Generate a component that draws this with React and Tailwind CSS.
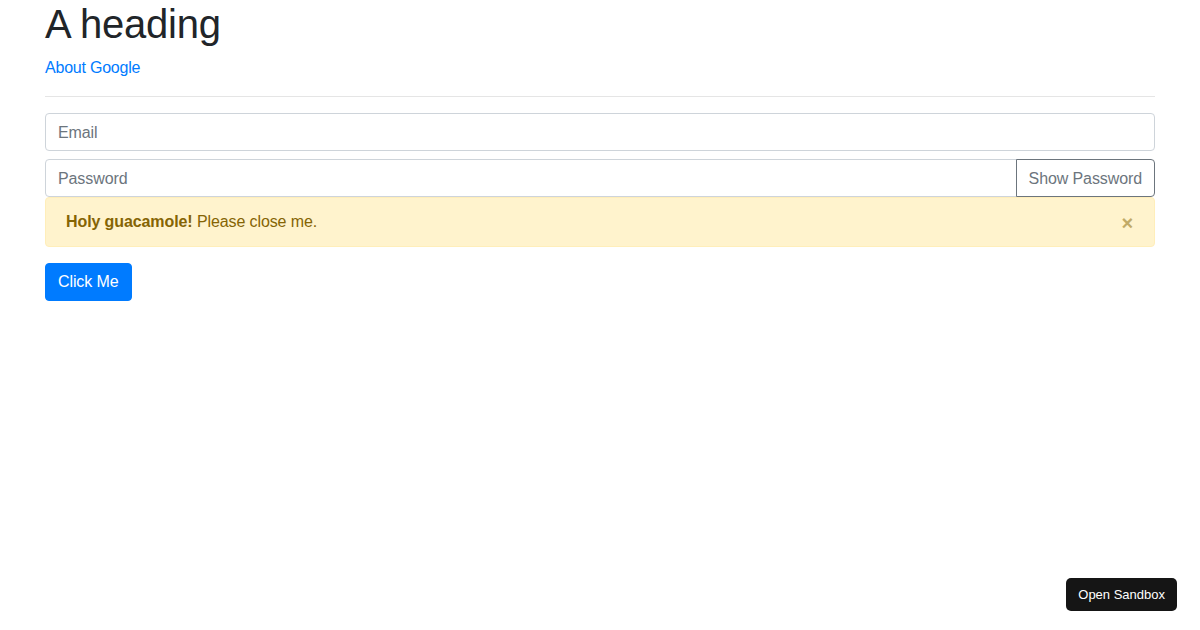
export default function App() {
  return (
    <div className="min-h-[630px] bg-white font-['Liberation_Sans',Arial,sans-serif] text-base leading-6 tracking-[-0.1px] text-[#212529]">
      <div className="mx-auto max-w-[1140px] px-[15px]">
        <h1 className="mb-2 text-[40px] font-medium leading-[48px] tracking-[-0.25px]">A heading</h1>
        <a href="#" className="tracking-[-0.22px] text-[#007bff] hover:underline">
          About Google
        </a>
        <hr className="my-4 border-t border-black/10" />

        <input
          type="text"
          placeholder="Email"
          className="mb-2 block h-[38px] w-full rounded border border-[#ced4da] px-3 pt-[2px] text-[#495057] placeholder:text-[#6c757d] focus:outline-none"
        />

        <div className="flex">
          <input
            type="password"
            placeholder="Password"
            className="block h-[38px] min-w-0 flex-1 rounded-l border border-[#ced4da] px-3 pt-[2px] text-[#495057] placeholder:text-[#6c757d] focus:outline-none"
          />
          <button className="-ml-px h-[38px] rounded-r border border-[#6c757d] px-3 pt-[1px] text-[#6c757d]">
            Show Password
          </button>
        </div>

        <div className="relative mb-4 rounded border border-[#ffeeba] bg-[#fff3cd] py-3 pl-5 pr-16 text-[#856404]">
          <strong className="font-bold">Holy guacamole!</strong> Please close me.
          <button className="absolute right-0 top-0 py-3 pl-5 pr-[21px] pt-[13px] text-[20px] font-bold leading-6 text-[#856404] opacity-50">
            ×
          </button>
        </div>

        <button className="h-[38px] rounded border border-[#007bff] bg-[#007bff] px-3 text-white">
          Click Me
        </button>
      </div>

      <button className="fixed bottom-[19px] right-[23px] h-[33px] rounded-[5px] bg-[#151515] px-3 text-[13px] tracking-normal text-white">
        Open Sandbox
      </button>
    </div>
  );
}
